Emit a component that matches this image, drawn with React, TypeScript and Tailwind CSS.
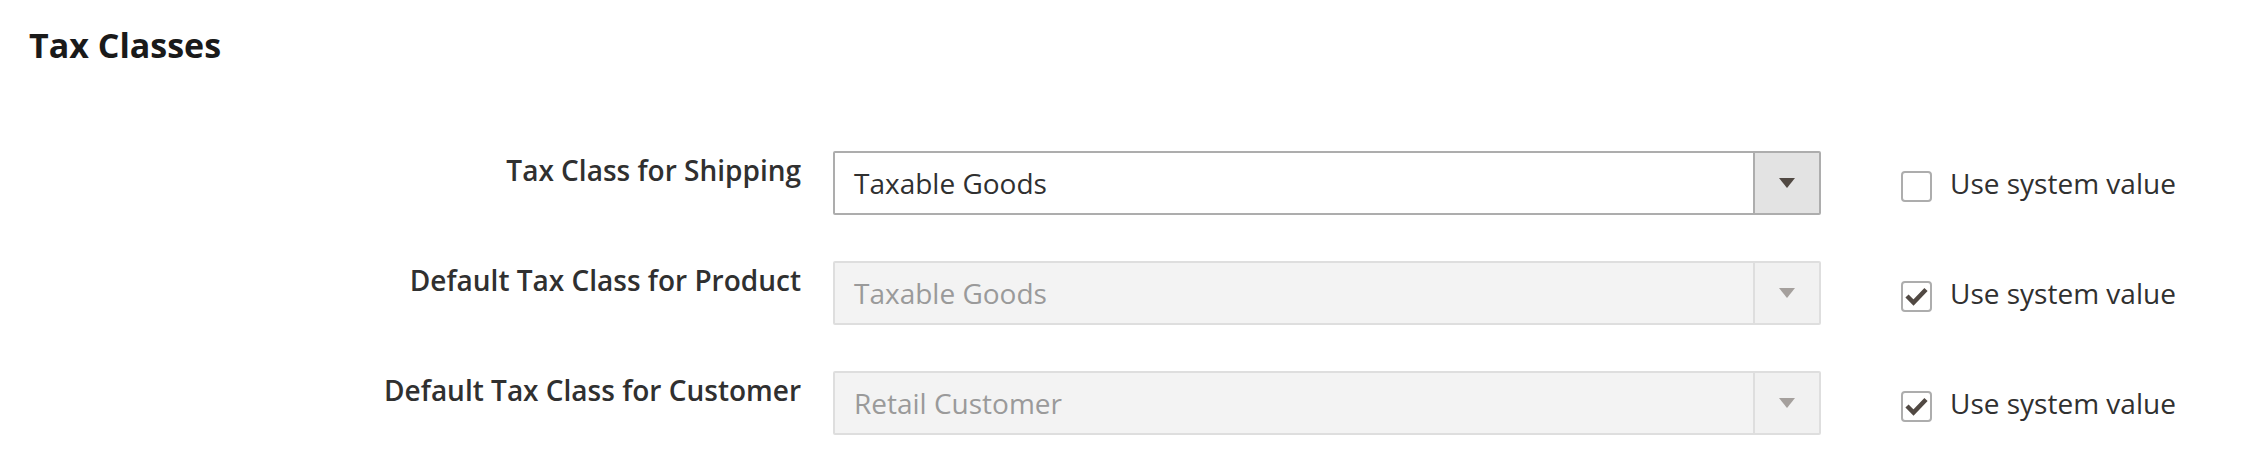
import type { ReactNode } from 'react';

type Row = {
  label: string;
  value: string;
  disabled: boolean;
};

const rows: Row[] = [
  { label: 'Tax Class for Shipping', value: 'Taxable Goods', disabled: false },
  { label: 'Default Tax Class for Product', value: 'Taxable Goods', disabled: true },
  { label: 'Default Tax Class for Customer', value: 'Retail Customer', disabled: true },
];

function Checkbox({ checked }: { checked: boolean }) {
  return (
    <span className="flex h-[31px] w-[31px] shrink-0 items-center justify-center rounded-[4px] border-2 border-[#adadad] bg-white">
      {checked && (
        <svg width="31" height="31" viewBox="0 0 31 31" className="-m-[2px]">
          <path d="M6 15 L12.5 21.5 L25 8.5" fill="none" stroke="#514943" strokeWidth="4.5" />
        </svg>
      )}
    </span>
  );
}

function Select({ value, disabled }: { value: string; disabled: boolean }): ReactNode {
  return (
    <div
      className={
        disabled
          ? 'flex h-[64px] w-[988px] rounded-[2px] border-2 border-[#dedede] bg-[#f3f3f3]'
          : 'flex h-[64px] w-[988px] rounded-[2px] border-2 border-[#adadad] bg-white'
      }
    >
      <div
        className={
          disabled
            ? 'flex flex-1 items-center pl-[19px] text-[28px] text-[#9a9a9a]'
            : 'flex flex-1 items-center pl-[19px] text-[28px] text-[#303030]'
        }
      >
        {value}
      </div>
      <div
        className={
          disabled
            ? 'flex w-[66px] items-center justify-center border-l-2 border-[#dedede] bg-[#f1f1f1]'
            : 'flex w-[66px] items-center justify-center border-l-2 border-[#adadad] bg-[#e3e3e3]'
        }
      >
        <svg width="16" height="10" viewBox="0 0 16 10">
          <path d="M0 0 H16 L8 10 Z" fill={disabled ? '#a5a09d' : '#514943'} />
        </svg>
      </div>
    </div>
  );
}

export default function App() {
  return (
    <div className="h-[476px] w-[2246px] bg-white font-['Open_Sans',sans-serif] text-[#303030]">
      <h2 className="pl-[29px] pt-[25px] text-[34px] font-bold leading-[40px] text-[#1a1a1a]">
        Tax Classes
      </h2>

      <div className="mt-[86px] flex flex-col gap-[46px]">
        {rows.map((row) => (
          <div key={row.label} className="flex items-start">
            <label className="w-[801px] text-right text-[28px] font-semibold leading-[39px]">
              {row.label}
            </label>
            <div className="ml-[32px]">
              <Select value={row.value} disabled={row.disabled} />
            </div>
            <div className="ml-[80px] mt-[20px] flex items-start">
              <Checkbox checked={row.disabled} />
              <span className="ml-[18px] -mt-[7px] text-[28px] leading-[38px] text-[#303030]">
                Use system value
              </span>
            </div>
          </div>
        ))}
      </div>
    </div>
  );
}
